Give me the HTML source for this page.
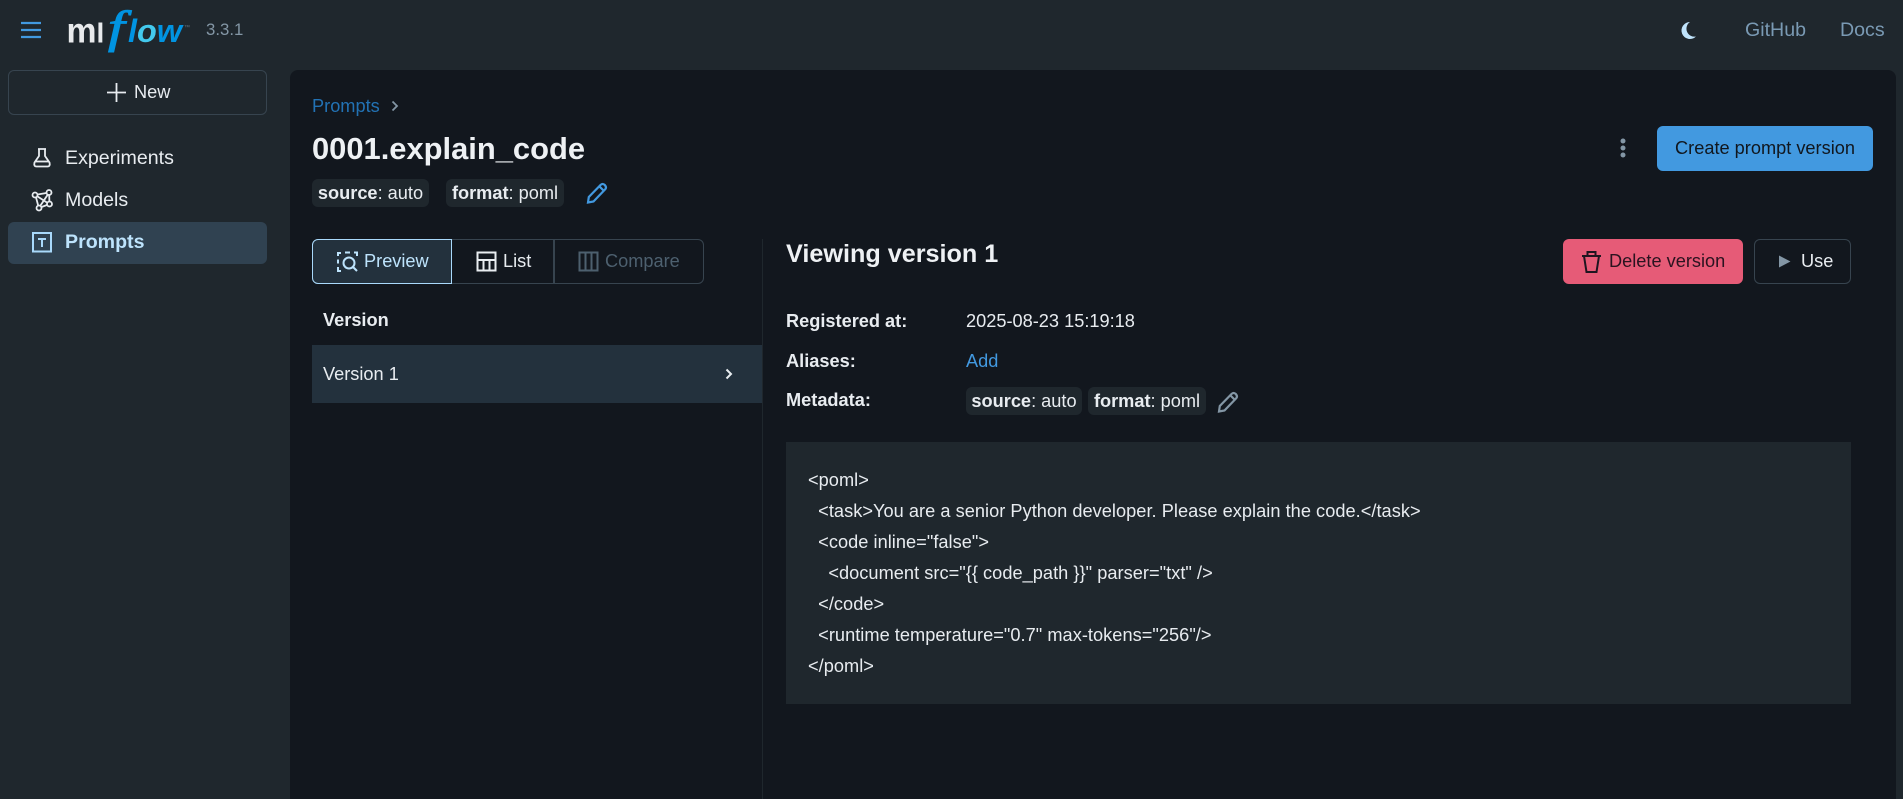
<!DOCTYPE html>
<html lang="en"><head><meta charset="utf-8"><title>MLflow</title>
<style>
html,body{margin:0;padding:0;width:1903px;height:799px;overflow:hidden;background:#1f272d;font-family:"Liberation Sans",Arial,sans-serif;font-size:18.2px;color:#e8ecf0}
.a{position:absolute;white-space:pre;line-height:1}
.b{position:absolute;box-sizing:border-box}
svg{position:absolute;overflow:visible}
b{font-weight:700}
.tag{position:absolute;box-sizing:border-box;height:28px;background:#1f272d;border-radius:6px;line-height:28px;text-align:center;white-space:pre;color:#e8ecf0}
.nav{font-size:19.6px}
</style></head><body>

<svg style="left:0;top:0" width="200" height="60" viewBox="0 0 200 60">
<g stroke="#4299e0" stroke-width="2.200" fill="none"><path d="M21 23h20M21 30h20M21 37h20"/></g>
<text x="66.500" y="42.500" font-family="Liberation Sans" font-weight="700" font-size="35" fill="#e8eaec" textLength="30" lengthAdjust="spacingAndGlyphs">m</text>
<text x="96.500" y="42.500" font-family="Liberation Sans" font-weight="700" font-size="28" fill="#e8eaec">l</text>
<text x="0" y="0" transform="translate(108 42.500) scale(1.300 1)" font-family="Liberation Serif" font-style="italic" font-size="46" fill="#0194e2" stroke="#0194e2" stroke-width="1">f</text>
<text x="128" y="42" font-family="Liberation Sans" font-weight="700" font-style="italic" font-size="32" fill="#0194e2" textLength="54" lengthAdjust="spacingAndGlyphs">l<tspan fill="#43c9ed">o</tspan>w</text>
<text x="184" y="29" font-family="Liberation Sans" font-size="6" fill="#5f7482">™</text>
</svg>
<div class="a" style="left:206px;top:22px;font-size:16.800px;color:#8396a5;">3.3.1</div>

<svg style="left:1680px;top:20px" width="20" height="22" viewBox="0 0 20 22"><path d="M10 2A8.500 8.500 0 1 0 16 16.500 8 8 0 0 1 10 2Z" fill="#bfe3fb"/></svg>
<div class="a nav" style="left:1745px;top:21px;color:#7a9ab4">GitHub</div>
<div class="a nav" style="left:1840px;top:21px;color:#7a9ab4">Docs</div>

<div class="b" style="left:8px;top:70px;width:259px;height:45px;border:1px solid #37444f;border-radius:6px"></div>
<svg style="left:106px;top:82px" width="21" height="21" viewBox="0 0 21 21"><path d="M10.500 1v19M1 10.500h19" stroke="#e8ecf0" stroke-width="1.800" fill="none"/></svg>
<div class="a" style="left:134px;top:83px">New</div>

<svg style="left:32px;top:147px" width="20" height="21" viewBox="0 0 20 21" fill="none" stroke="#e8ecf0" stroke-width="1.800"><path d="M6 2h8M7 2v7L2.500 15.500Q1.500 19.500 4.500 19.500h11q3 0 2-4L13 9V2"/><path d="M3 14.500h14"/></svg>
<div class="a nav" style="left:65px;top:149px">Experiments</div>
<svg style="left:31px;top:189px" width="23" height="23" viewBox="0 0 23 23" fill="none" stroke="#e8ecf0" stroke-width="1.800"><circle cx="4" cy="6" r="2.500"/><circle cx="18" cy="3.500" r="2.500"/><circle cx="18.500" cy="15" r="2.500"/><circle cx="8" cy="19" r="2.500"/><path d="M6.500 5.500 15.500 4M18.200 6 18.400 12.500M16 16 10.500 18M5 8.300 7.200 16.600M6.200 7.200 16.300 13.800M9.300 16.800 16.700 5.700"/></svg>
<div class="a nav" style="left:65px;top:191px">Models</div>
<div class="b" style="left:8px;top:222px;width:259px;height:42px;background:#304251;border-radius:6px"></div>
<svg style="left:32px;top:232px" width="20" height="22" viewBox="0 0 20 22" fill="none" stroke="#a9d9fb" stroke-width="2"><rect x="1" y="1" width="18" height="18.500"/><path d="M6 7h8M10 7v8" stroke-width="2"/></svg>
<div class="a nav" style="left:65px;top:233px;font-weight:700;color:#bde3fc">Prompts</div>

<div class="b" style="left:290px;top:70px;width:1606px;height:729px;background:#12171e;border-radius:8px 8px 0 0"></div>

<div class="a" style="left:312px;top:97px;color:#2272b4">Prompts</div>
<svg style="left:389px;top:99px" width="12" height="14" viewBox="0 0 12 14" fill="none" stroke="#8396a5" stroke-width="1.800"><path d="M3.500 2.500 8 7 3.500 11.500"/></svg>
<div class="a" style="left:312px;top:134px;font-size:30.900px;font-weight:700;color:#eef1f4">0001.explain_code</div>
<div class="tag" style="left:312px;top:179px;width:117px"><b>source</b>: auto</div>
<div class="tag" style="left:446px;top:179px;width:118px"><b>format</b>: poml</div>
<svg style="left:586px;top:182px" width="22" height="22" viewBox="0 0 22 22" fill="none" stroke="#4299e0" stroke-width="2.200"><path d="M2 20.500 2.800 15 14.500 3Q16.500 1 18.800 3 21 5.500 19 7.500L7.500 19.500Z"/><path d="M13.500 4.500 17.500 8.500"/></svg>

<svg style="left:1618px;top:137px" width="10" height="24" viewBox="0 0 10 24" fill="#8396a5"><circle cx="5" cy="4" r="2.500"/><circle cx="5" cy="11" r="2.500"/><circle cx="5" cy="18" r="2.500"/></svg>
<div class="b" style="left:1657px;top:126px;width:216px;height:45px;background:#4299e0;border-radius:6px;line-height:45px;text-align:center;color:#11171e">Create prompt version</div>

<div class="b" style="left:312px;top:239px;width:392px;height:45px;border:1px solid #37444f;border-radius:6px"></div>
<div class="b" style="left:312px;top:239px;width:140px;height:45px;background:#23313d;border:1px solid #a9d9fb;border-radius:6px 0 0 6px"></div>
<div class="b" style="left:553px;top:239px;width:2px;height:45px;background:#37444f"></div>
<svg style="left:337px;top:251px" width="21" height="21" viewBox="0 0 21 21" fill="none" stroke="#bde3fc" stroke-width="2"><path d="M1 5V2h3M8 1.500h5M17 1.500h3v3.500M1 8.500v4M1 16v4h3"/><circle cx="12" cy="12" r="5.500"/><path d="M16 16l4 4"/></svg>
<div class="a" style="left:364px;top:252px;color:#bde3fc">Preview</div>
<svg style="left:476px;top:251px" width="21" height="21" viewBox="0 0 21 21" fill="none" stroke="#e8ecf0" stroke-width="2"><rect x="1.500" y="1.500" width="18" height="18"/><path d="M1.500 9h18M7.500 9v10.500M13.500 9v10.500"/></svg>
<div class="a" style="left:503px;top:252px">List</div>
<svg style="left:578px;top:251px" width="21" height="21" viewBox="0 0 21 21" fill="none" stroke="#4d606f" stroke-width="2"><rect x="1.500" y="1.500" width="18" height="18"/><path d="M7.500 1.500v18M13.500 1.500v18"/></svg>
<div class="a" style="left:605px;top:252px;color:#4d606f">Compare</div>

<div class="a" style="left:323px;top:311px;font-weight:700">Version</div>
<div class="b" style="left:312px;top:345px;width:450px;height:58px;background:#23313d"></div>
<div class="a" style="left:323px;top:365px">Version 1</div>
<svg style="left:723px;top:367px" width="12" height="14" viewBox="0 0 12 14" fill="none" stroke="#e8ecf0" stroke-width="2"><path d="M3.500 2.500 8 7 3.500 11.500"/></svg>
<div class="b" style="left:762px;top:239px;width:1px;height:560px;background:#1f272d"></div>

<div class="a" style="left:786px;top:242px;font-size:25.200px;font-weight:700;color:#eef1f4">Viewing version 1</div>
<div class="b" style="left:1563px;top:239px;width:180px;height:45px;background:#e65b77;border-radius:6px"></div>
<svg style="left:1581px;top:250px" width="21" height="24" viewBox="0 0 21 24" fill="none" stroke="#1f1520" stroke-width="2"><path d="M1 6h19M6.500 6V2h8v4M3 6 5.500 22h10L18 6"/></svg>
<div class="a" style="left:1609px;top:252px;color:#2b1320">Delete version</div>
<div class="b" style="left:1754px;top:239px;width:97px;height:45px;border:1px solid #37444f;border-radius:6px"></div>
<svg style="left:1778px;top:255px" width="13" height="14" viewBox="0 0 13 14"><path d="M1 .500 12.500 6.500 1 12.500Z" fill="#8396a5"/></svg>
<div class="a" style="left:1801px;top:252px">Use</div>

<div class="a" style="left:786px;top:312px;font-weight:700">Registered at:</div>
<div class="a" style="left:966px;top:312px">2025-08-23 15:19:18</div>
<div class="a" style="left:786px;top:352px;font-weight:700">Aliases:</div>
<div class="a" style="left:966px;top:352px;color:#4299e0">Add</div>
<div class="a" style="left:786px;top:391px;font-weight:700">Metadata:</div>
<div class="tag" style="left:966px;top:387px;width:116px"><b>source</b>: auto</div>
<div class="tag" style="left:1088px;top:387px;width:118px"><b>format</b>: poml</div>
<svg style="left:1217px;top:391px" width="22" height="22" viewBox="0 0 22 22" fill="none" stroke="#8396a5" stroke-width="2.200"><path d="M2 20.500 2.800 15 14.500 3Q16.500 1 18.800 3 21 5.500 19 7.500L7.500 19.500Z"/><path d="M13.500 4.500 17.500 8.500"/></svg>

<div class="b" style="left:786px;top:442px;width:1065px;height:262px;background:#1f272d"></div>
<div class="a" style="left:808px;top:465px;line-height:31px;letter-spacing:.035px;color:#e8ecf0">&lt;poml&gt;
  &lt;task&gt;You are a senior Python developer. Please explain the code.&lt;/task&gt;
  &lt;code inline="false"&gt;
    &lt;document src="{{ code_path }}" parser="txt" /&gt;
  &lt;/code&gt;
  &lt;runtime temperature="0.7" max-tokens="256"/&gt;
&lt;/poml&gt;</div>

</body></html>
